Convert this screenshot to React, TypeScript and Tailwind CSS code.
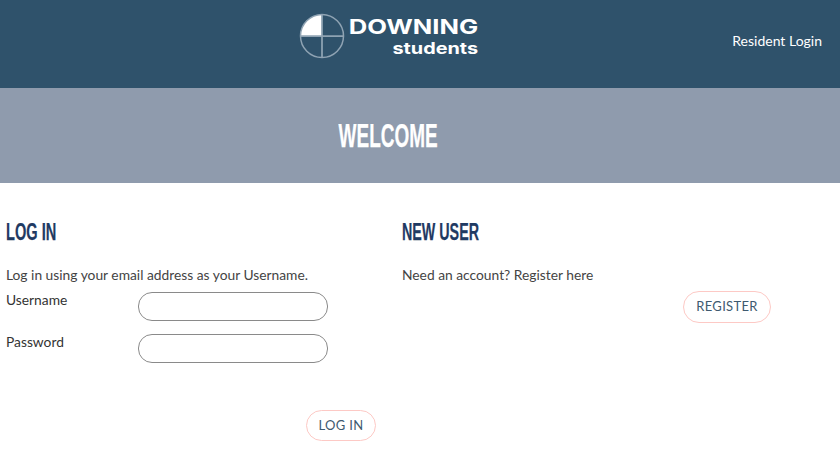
const bodyFont = "font-['Lato','Inter',sans-serif]";
const headFont = "font-['Liberation_Sans',sans-serif] [-webkit-text-stroke:0.25px]";

function Logo() {
  return (
    <div className="flex items-start self-start mt-[13px]">
      <svg width="46" height="46" viewBox="0 0 46 46" fill="none">
        <path d="M23 1.5A21.5 21.5 0 0 0 1.5 23H23Z" fill="#fff" />
        <circle cx="23" cy="23" r="21.5" stroke="#8fa3b3" strokeWidth="1.5" />
        <path d="M23 1.5V44.5M1.5 23H44.5" stroke="#8fa3b3" strokeWidth="1.75" />
      </svg>
      <div className="ml-[32px] flex flex-col items-end text-white font-['Inter',sans-serif] font-bold">
        <span className="text-[20px] leading-[24px] mt-[2px] origin-right scale-x-[1.28]">DOWNING</span>
        <span className="text-[16px] leading-[19px] origin-right scale-x-[1.24]">students</span>
      </div>
    </div>
  );
}

function Field({ label }: { label: string }) {
  return (
    <div className="flex items-start">
      <label className="w-[132px] text-[13.8px] leading-[18px] text-[#333] -mt-[1px]">{label}</label>
      <input className="w-[190px] h-[29px] rounded-[14px] border border-[#8a8a8a] bg-white" />
    </div>
  );
}

function PillButton({ children, className }: { children: string; className: string }) {
  return (
    <button className={`h-[31px] rounded-full border border-[#fdc9c5] bg-white text-[13px] text-[#3e5a70] tracking-[0.3px] ${className}`}>
      {children}
    </button>
  );
}

export default function App() {
  return (
    <div className={`w-[840px] h-[450px] overflow-hidden bg-white ${bodyFont}`}>
      <header className="h-[88px] bg-[#2f526b] flex items-center justify-between pl-[299px] pr-[18px]">
        <Logo />
        <a className="text-[14px] text-white mb-[7px]">Resident Login</a>
      </header>
      <div className="h-[95px] bg-[#8f9bad] flex items-center justify-center pr-[63px]">
        <h1 className={`${headFont} text-[33px] font-bold text-white scale-x-[.575]`}>WELCOME</h1>
      </div>
      <main className="grid grid-cols-[396px_1fr] pl-[6px]">
        <section className="flex flex-col">
          <h2 className={`${headFont} mt-[33px] w-fit origin-left scale-x-[.595] text-[24.5px] leading-[32px] font-bold text-[#1f3a63]`}>LOG IN</h2>
          <p className="mt-[18px] text-[13.8px] leading-[18px] text-[#444]">Log in using your email address as your Username.</p>
          <div className="mt-[8px] flex flex-col gap-[13px]">
            <Field label="Username" />
            <Field label="Password" />
          </div>
          <PillButton className="mt-[47px] ml-[300px] w-[70px]">LOG IN</PillButton>
        </section>
        <section className="flex flex-col">
          <h2 className={`${headFont} mt-[33px] w-fit origin-left scale-x-[.583] text-[24.5px] leading-[32px] font-bold text-[#1f3a63]`}>NEW USER</h2>
          <p className="mt-[18px] text-[13.8px] leading-[18px] text-[#444]">Need an account? Register here</p>
          <PillButton className="mt-[7px] ml-[281px] w-[88px] h-[32px]">REGISTER</PillButton>
        </section>
      </main>
    </div>
  );
}
